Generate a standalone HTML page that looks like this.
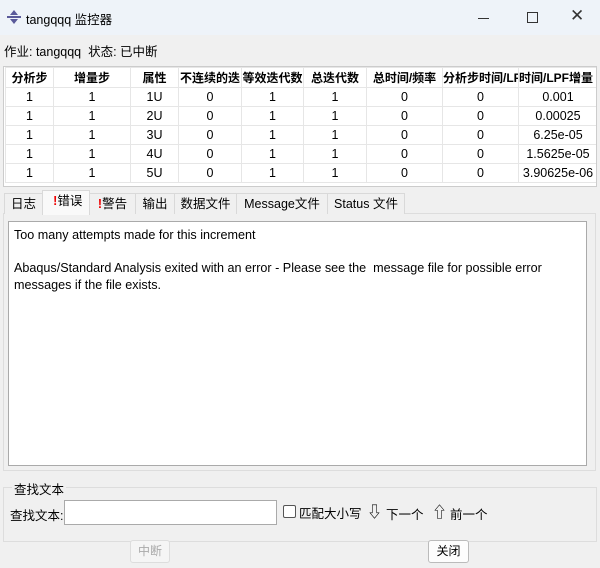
<html><head><style>
body{margin:0;width:600px;height:568px;background:#f0f0f0;font-family:"Liberation Sans","Noto Sans CJK SC",sans-serif;font-size:12px;color:#000;position:relative;overflow:hidden}
.a{position:absolute}
table{border-collapse:collapse;table-layout:fixed}
td{border:1px solid #e6e6e6;text-align:center;height:19px;padding:0;white-space:nowrap;overflow:hidden;font-size:12.5px}
th{border:1px solid #e6e6e6;height:20px;padding:0;white-space:nowrap;overflow:hidden;font-size:12px;background:#fff}
.tab{position:absolute;top:193px;height:20px;border:1px solid #d9d9d9;border-bottom:none;background:#f0f0f0;line-height:20px;text-align:center;font-size:12.5px}
.r{color:#e00;font-weight:bold}
</style></head><body>
<div class="a" style="left:0;top:0;width:600px;height:35px;background:#eef3f9"></div>
<svg class="a" style="left:7px;top:10px" width="14" height="14" viewBox="0 0 14 14"><polygon points="7,0 11,5 3,5" fill="#5a5a9a"/><rect x="0" y="6" width="14" height="2" fill="#5a5a9a"/><polygon points="7,14 11,9 3,9" fill="#5a5a9a"/></svg>
<div class="a" style="left:26px;top:9px;font-size:12.5px">tangqqq 监控器</div>
<div class="a" style="left:478px;top:18px;width:11px;height:1px;background:#333"></div>
<div class="a" style="left:527px;top:12px;width:9px;height:9px;border:1px solid #333"></div>
<div class="a" style="left:570px;top:6px;font-size:17px;color:#333">✕</div>
<div class="a" style="left:4px;top:41px;font-size:12.5px">作业: tangqqq&nbsp; 状态: 已中断</div>
<div class="a" style="left:3px;top:66px;width:594px;height:121px;background:#fff;border:1px solid #ccc;box-sizing:border-box;overflow:hidden">
<table style="margin-left:1px;width:592px">
<colgroup><col style="width:48px"><col style="width:77px"><col style="width:48px"><col style="width:63px"><col style="width:62px"><col style="width:63px"><col style="width:76px"><col style="width:76px"><col style="width:79px"></colgroup>
<tr><th>分析步</th><th>增量步</th><th>属性</th><th>不连续的迭</th><th>等效迭代数</th><th>总迭代数</th><th>总时间/频率</th><th style="text-align:right">分析步时间/LP</th><th style="text-align:left">时间/LPF增量</th></tr>
<tr><td>1</td><td>1</td><td>1U</td><td>0</td><td>1</td><td>1</td><td>0</td><td>0</td><td>0.001</td></tr>
<tr><td>1</td><td>1</td><td>2U</td><td>0</td><td>1</td><td>1</td><td>0</td><td>0</td><td>0.00025</td></tr>
<tr><td>1</td><td>1</td><td>3U</td><td>0</td><td>1</td><td>1</td><td>0</td><td>0</td><td>6.25e-05</td></tr>
<tr><td>1</td><td>1</td><td>4U</td><td>0</td><td>1</td><td>1</td><td>0</td><td>0</td><td>1.5625e-05</td></tr>
<tr><td>1</td><td>1</td><td>5U</td><td>0</td><td>1</td><td>1</td><td>0</td><td>0</td><td>3.90625e-06</td></tr>
</table></div>
<div class="a" style="left:3px;top:213px;width:593px;height:258px;border:1px solid #ddd;box-sizing:border-box"></div>
<div class="tab" style="left:4px;width:37px">日志</div>
<div class="tab" style="left:42px;top:190px;height:24px;width:46px;background:#f9f9f9">&nbsp;<span class="r">!</span>错误</div>
<div class="tab" style="left:89px;width:45px"><span class="r">!</span>警告</div>
<div class="tab" style="left:135px;width:38px">输出</div>
<div class="tab" style="left:174px;width:61px">数据文件</div>
<div class="tab" style="left:236px;width:90px">Message文件</div>
<div class="tab" style="left:327px;width:76px">Status 文件</div>
<div class="a" style="left:8px;top:221px;width:579px;height:245px;background:#fff;border:1px solid #aaa;box-sizing:border-box;padding:5px 5px;line-height:16.5px;font-size:12.6px">Too many attempts made for this increment<br><br>Abaqus/Standard Analysis exited with an error - Please see the&nbsp; message file for possible error messages if the file exists.</div>
<div class="a" style="left:3px;top:487px;width:594px;height:55px;border:1px solid #ddd;box-sizing:border-box"></div>
<div class="a" style="left:12px;top:479px;background:#f0f0f0;padding:0 2px;font-size:12.5px">查找文本</div>
<div class="a" style="left:10px;top:505px;font-size:12.5px">查找文本:</div>
<div class="a" style="left:64px;top:500px;width:213px;height:25px;background:#fff;border:1px solid #aaa;box-sizing:border-box"></div>
<div class="a" style="left:283px;top:505px;width:11px;height:11px;border:1px solid #555;border-radius:2px;background:#fff"></div>
<div class="a" style="left:299px;top:503px;font-size:12.5px">匹配大小写</div>
<div class="a" style="left:367px;top:501px;font-size:15px">⇩</div>
<div class="a" style="left:386px;top:504px;font-size:12.5px">下一个</div>
<div class="a" style="left:432px;top:501px;font-size:15px">⇧</div>
<div class="a" style="left:450px;top:504px;font-size:12.5px">前一个</div>
<div class="a" style="left:130px;top:540px;width:40px;height:23px;border:1px solid #ddd;border-radius:3px;box-sizing:border-box;text-align:center;line-height:21px;color:#aaa;background:#f5f5f5">中断</div>
<div class="a" style="left:428px;top:540px;width:41px;height:23px;border:1px solid #bbb;border-radius:3px;box-sizing:border-box;text-align:center;line-height:21px;background:#fdfdfd">关闭</div>
</body></html>
